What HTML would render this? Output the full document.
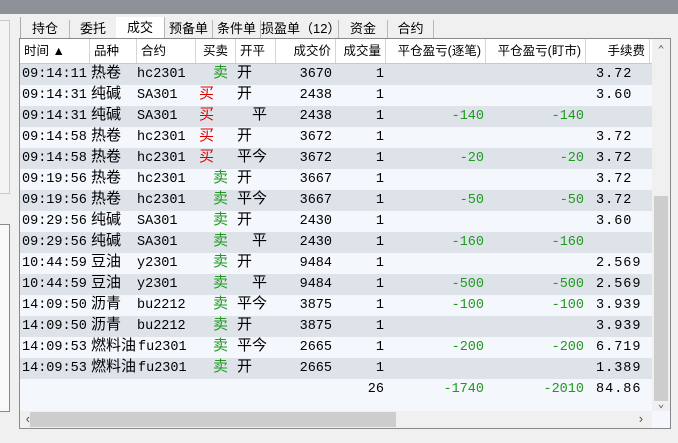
<!DOCTYPE html>
<html><head><meta charset="utf-8"><style>
body{margin:0;width:678px;height:443px;overflow:hidden;background:#f0f0f0;font-family:"Liberation Mono","Noto Sans CJK SC",monospace;font-size:13.5px;color:#000;position:relative}
.abs{position:absolute}
.top{left:0;top:0;width:678px;height:14px;background:#8d9299}
.tab{position:absolute;top:20px;height:18px;line-height:18px;font-family:"Liberation Sans","Noto Sans CJK SC",sans-serif;font-size:13px;text-align:center;border-right:1px solid #b8b8b8}
.box{left:19px;top:38px;width:650px;height:389px;border:1px solid #8a8a8a;background:#f4f7fc;overflow:hidden}
.hdr{position:absolute;left:0;top:0;height:24px;width:640px;background:#fff;border-bottom:1px solid #c8c8c8;font-family:"Liberation Sans","Noto Sans CJK SC",sans-serif;font-size:12.5px}
.hdr div{position:absolute;top:0;height:24px;line-height:24px;border-right:1px solid #d5d5d5;box-sizing:border-box;padding:0 4px}
.row{position:absolute;left:0;width:633px;height:21px;line-height:21px}
.row div{position:absolute;top:0;height:21px;white-space:nowrap}
.row div.cj{font-family:"Noto Sans CJK SC",sans-serif;font-size:15px;line-height:19px;top:-2px}
.g{background:#dee3ea}
.gr{color:#1f9a1f}.rd{color:#e00000}
.r{text-align:right}
</style></head><body>
<div class="abs top"></div>
<div class="abs" style="left:0;top:20px;width:9px;height:172px;border:1px solid #c9c9c9;border-left:none;background:#f4f4f4"></div>
<div class="abs" style="left:0;top:224px;width:9px;height:186px;border:1px solid #8a8a8a;border-left:none;background:#f9f9f9"></div>
<div class="abs" style="left:20px;top:17px;width:1px;height:21px;background:#aaa"></div>
<div class="tab" style="left:21px;width:48px">持仓</div>
<div class="tab" style="left:70px;width:46px">委托</div>
<div class="tab" style="left:116px;width:48px;background:#fff;top:17px;height:21px;line-height:22px">成交</div>
<div class="tab" style="left:165px;width:47px">预备单</div>
<div class="tab" style="left:213px;width:47px">条件单</div>
<div class="tab" style="left:261px;width:77px">损盈单（12）</div>
<div class="tab" style="left:339px;width:48px">资金</div>
<div class="tab" style="left:388px;width:45px">合约</div>
<div class="abs box">
<div class="hdr">
<div style="left:0;width:70px">时间 ▲</div>
<div style="left:70px;width:47px">品种</div>
<div style="left:117px;width:59px">合约</div>
<div style="left:176px;width:40px;text-align:center">买卖</div>
<div style="left:216px;width:40px">开平</div>
<div style="left:256px;width:60px;text-align:right">成交价</div>
<div style="left:316px;width:50px;text-align:right">成交量</div>
<div style="left:366px;width:100px;text-align:right">平仓盈亏(逐笔)</div>
<div style="left:466px;width:100px;text-align:right">平仓盈亏(盯市)</div>
<div style="left:566px;width:64px;text-align:right">手续费</div>
</div>
<div id="rows"></div>
<div class="abs" style="left:632px;top:0;width:18px;height:372px;background:#f0f0f0"><div style="text-align:center;font-size:11px;color:#555;margin-top:4px">&#8963;</div><div class="abs" style="left:2px;top:157px;width:14px;height:205px;background:#cdcdcd"></div><div class="abs" style="left:0;top:358px;width:18px;text-align:center;font-size:11px;color:#555">&#8964;</div></div>
<div class="abs" style="left:0;top:372px;width:632px;height:17px;background:#f0f0f0"><div class="abs" style="left:4px;top:0;font-size:13px;color:#555;line-height:17px">‹</div><div class="abs" style="left:10px;top:1px;width:366px;height:15px;background:#cdcdcd"></div><div class="abs" style="left:617px;top:0;font-size:13px;color:#555;line-height:17px">›</div></div>
</div>
<script>
var d=[["09:14:11","热卷","hc2301","卖","开","3670","1","","","3.72"],
["09:14:31","纯碱","SA301","买","开","2438","1","","","3.60"],
["09:14:31","纯碱","SA301","买","　平","2438","1","-140","-140",""],
["09:14:58","热卷","hc2301","买","开","3672","1","","","3.72"],
["09:14:58","热卷","hc2301","买","平今","3672","1","-20","-20","3.72"],
["09:19:56","热卷","hc2301","卖","开","3667","1","","","3.72"],
["09:19:56","热卷","hc2301","卖","平今","3667","1","-50","-50","3.72"],
["09:29:56","纯碱","SA301","卖","开","2430","1","","","3.60"],
["09:29:56","纯碱","SA301","卖","　平","2430","1","-160","-160",""],
["10:44:59","豆油","y2301","卖","开","9484","1","","","2.569"],
["10:44:59","豆油","y2301","卖","　平","9484","1","-500","-500","2.569"],
["14:09:50","沥青","bu2212","卖","平今","3875","1","-100","-100","3.939"],
["14:09:50","沥青","bu2212","卖","开","3875","1","","","3.939"],
["14:09:53","燃料油","fu2301","卖","平今","2665","1","-200","-200","6.719"],
["14:09:53","燃料油","fu2301","卖","开","2665","1","","","1.389"],
["","","","","","","26","-1740","-2010","84.86"]];
var h="";
d.forEach(function(r,i){
 var t=25+i*21;
 var bs=r[3]=="买"?"rd":"gr";
 var bl=r[3]=="买"?"left:179px":"left:193px";
 h+='<div class="row'+(i%2==0&&i<15?' g':'')+'" style="top:'+t+'px">'+
 '<div style="left:2px">'+r[0]+'</div>'+
 '<div class="cj" style="left:71px">'+r[1]+'</div>'+
 '<div style="left:'+(r[1].length>2?'118':'117')+'px">'+r[2]+'</div>'+
 '<div class="cj '+bs+'" style="'+bl+'">'+r[3]+'</div>'+
 '<div class="cj" style="left:217px">'+r[4]+'</div>'+
 '<div class="r" style="left:256px;width:56px">'+r[5]+'</div>'+
 '<div class="r" style="left:316px;width:48px">'+r[6]+'</div>'+
 '<div class="r gr" style="left:366px;width:98px">'+r[7]+'</div>'+
 '<div class="r gr" style="left:466px;width:98px">'+r[8]+'</div>'+
 '<div style="left:576px;letter-spacing:1px">'+r[9]+'</div></div>';
});
document.getElementById("rows").innerHTML=h;
</script>
</body></html>
